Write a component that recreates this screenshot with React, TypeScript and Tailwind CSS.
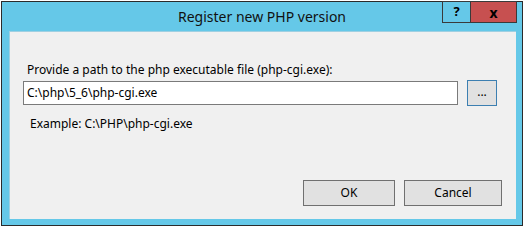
export default function App() {
  const font = { fontFamily: '"Noto Sans", "Open Sans", sans-serif' }

  return (
    <div className="w-[524px] h-[228px] bg-white pl-px pt-px" style={font}>
      <div className="w-[522px] h-[225px] border border-[#2b2b2b] bg-[#65c8e8] flex flex-col">
        {/* title bar */}
        <div className="relative h-[29px] flex items-center justify-center shrink-0">
          <span className="text-[14px] text-[#111] leading-none pt-[1px]">Register new PHP version</span>
          <div className="absolute right-[5px] top-[-1px] flex">
            <div className="w-[29px] h-[22px] border border-[#3a3a3a] flex items-center justify-center text-[13px] font-bold text-black">
              ?
            </div>
            <div className="w-[46px] h-[22px] border border-l-0 border-[#3a3a3a] bg-[#c75050] flex items-center justify-center text-[14px] font-bold text-black">
              x
            </div>
          </div>
        </div>

        {/* client area */}
        <div className="flex-1 ml-[7px] mr-[6px] mb-[6px] bg-[#f0f0f0] border-t border-l border-[#9fd0e2] flex flex-col pl-[13px] pr-[14px] pt-[30px]">
          <div className="ml-[4px] text-[12px] leading-[16px] text-black">
            Provide a path to the php executable file (php-cgi.exe):
          </div>
          <div className="flex items-center gap-[9px] mt-[2px]">
            <div className="w-[435px] h-[24px] border border-[#7a7a7a] bg-white flex items-center px-[3px] text-[12px] text-black">
              C:\php\5_6\php-cgi.exe
            </div>
            <div className="w-[30px] h-[26px] border border-[#3c7fb1] bg-[#e1e1e1] flex items-center justify-center text-[12px] text-black leading-none pb-[2px]">
              ...
            </div>
          </div>
          <div className="ml-[7px] mt-[10px] text-[12px] leading-[16px] text-black">
            Example: C:\PHP\php-cgi.exe
          </div>
          <div className="flex-1" />
          <div className="flex justify-end gap-[9px] pb-[13px]">
            <button className="w-[92px] h-[26px] border border-[#707070] bg-[#e1e1e1] text-[12px] text-black">
              OK
            </button>
            <button className="w-[98px] h-[26px] border border-[#707070] bg-[#e1e1e1] text-[12px] text-black">
              Cancel
            </button>
          </div>
        </div>
      </div>
    </div>
  )
}
